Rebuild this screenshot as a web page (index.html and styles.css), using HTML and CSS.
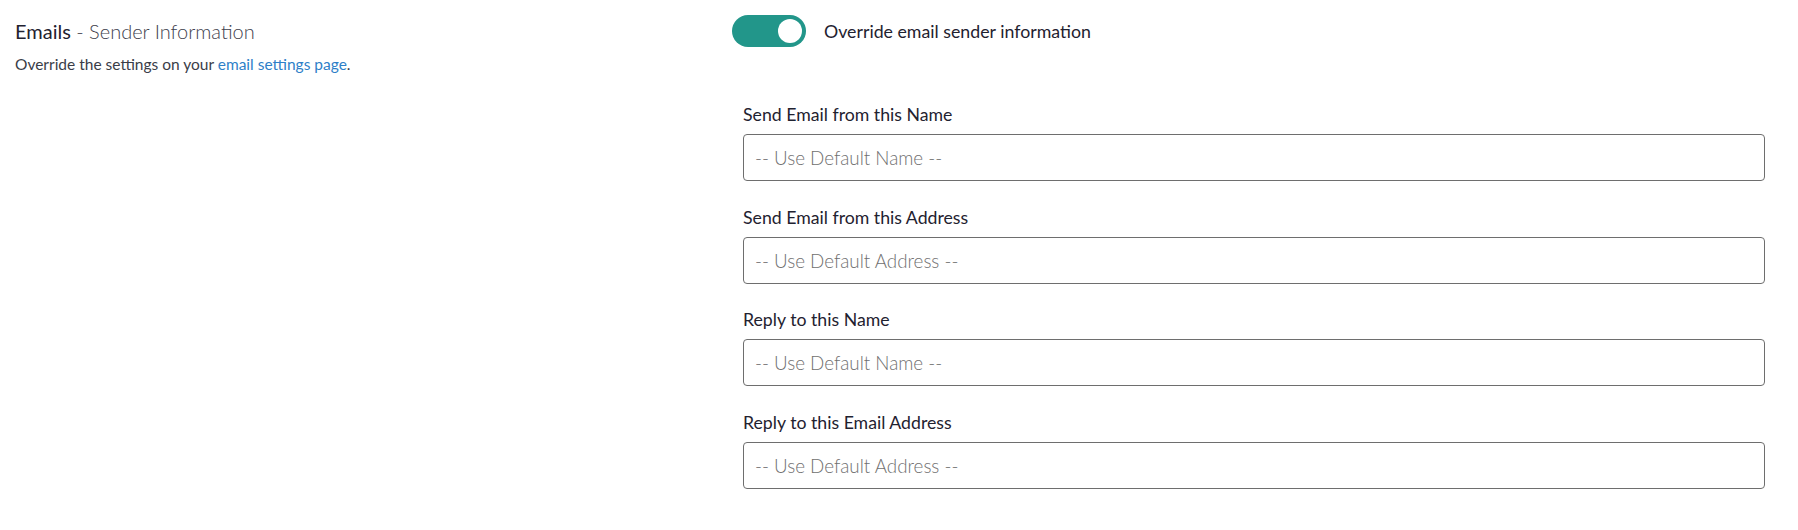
FILE: index.html
```html
<!DOCTYPE html>
<html>
<head>
<meta charset="utf-8">
<link rel="stylesheet" href="styles.css">
</head>
<body>
<div class="section">
  <div class="intro">
    <h2 class="title"><span class="title-strong">Emails</span> - Sender Information</h2>
    <p class="desc">Override the settings on your <a href="#" class="link">email settings page</a>.</p>
  </div>
  <div class="settings">
    <label class="switch-row">
      <span class="switch"><span class="knob"></span></span>
      <span class="switch-label">Override email sender information</span>
    </label>
    <div class="fields">
      <div class="field">
        <label class="field-label">Send Email from this Name</label>
        <input class="field-input" type="text" placeholder="-- Use Default Name --">
      </div>
      <div class="field">
        <label class="field-label">Send Email from this Address</label>
        <input class="field-input" type="text" placeholder="-- Use Default Address --">
      </div>
      <div class="field">
        <label class="field-label">Reply to this Name</label>
        <input class="field-input" type="text" placeholder="-- Use Default Name --">
      </div>
      <div class="field">
        <label class="field-label">Reply to this Email Address</label>
        <input class="field-input" type="text" placeholder="-- Use Default Address --">
      </div>
    </div>
  </div>
</div>
</body>
</html>
```

FILE: styles.css
```css
* { box-sizing: border-box; }
html, body { margin: 0; padding: 0; background: #fff; }
body {
  font-family: Lato, "Noto Sans", sans-serif;
  color: #1f2230;
}
.section {
  display: flex;
  padding: 15px 33px 0 15px;
}
.intro {
  flex: 0 0 717px;
}
.title {
  margin: 2px 0 0 0;
  font-size: 20px;
  line-height: 28px;
  font-weight: 300;
  color: #3e414d;
}
.title-strong {
  font-weight: 400;
  color: #1f2230;
}
.desc {
  margin: 8px 0 0 0;
  font-size: 15.5px;
  line-height: 22px;
  color: #3a3d48;
}
.link {
  color: #2e7fc8;
  text-decoration: none;
}
.settings {
  flex: 1;
}
.switch-row {
  display: flex;
  align-items: center;
  gap: 18px;
}
.switch {
  width: 74px;
  height: 32px;
  border-radius: 16px;
  background: #22968a;
  display: flex;
  align-items: center;
  justify-content: flex-end;
  padding-right: 4px;
}
.knob {
  width: 24px;
  height: 24px;
  border-radius: 50%;
  background: #fff;
}
.switch-label {
  font-size: 17.75px;
  color: #1f2230;
}
.fields {
  padding-left: 11px;
  margin-top: 56px;
  display: flex;
  flex-direction: column;
  gap: 24.5px;
}
.field {
  display: flex;
  flex-direction: column;
  gap: 7px;
}
.field-label {
  font-size: 17.7px;
  line-height: 24px;
  color: #1f2230;
}
.field-input {
  width: 100%;
  height: 47px;
  border: 1px solid #6e6e6e;
  border-radius: 4px;
  padding: 0 11px;
  font-family: Lato, "Noto Sans", sans-serif;
  font-size: 18.8px;
  font-weight: 300;
  color: #333;
}
.field-input::placeholder {
  color: #707070;
}
```
